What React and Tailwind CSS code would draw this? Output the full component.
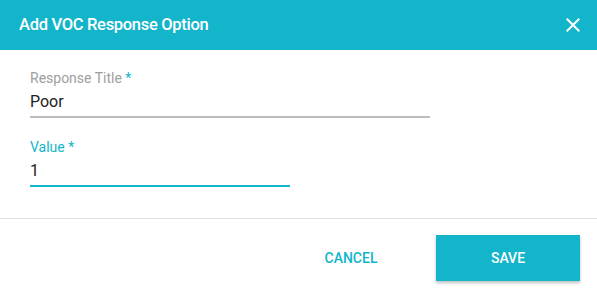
function CloseIcon() {
  return (
    <svg width="24" height="24" viewBox="0 0 24 24" fill="currentColor">
      <path d="M19 6.41L17.59 5 12 10.59 6.41 5 5 6.41 10.59 12 5 17.59 6.41 19 12 13.41 17.59 19 19 17.59 13.41 12z" />
    </svg>
  )
}

function Field({ label, value, width, focused }) {
  return (
    <div className={width}>
      <label
        className={`block text-[14px] leading-[16px] ${
          focused ? 'text-[#13b5cb]' : 'text-[#9e9e9e]'
        }`}
      >
        {label} <span className="text-[#13b5cb]">*</span>
      </label>
      <div className="mt-[5px] h-[22px] text-[16px] leading-[22px] text-[#212121]">{value}</div>
      <div className={`mt-[3px] h-[2px] ${focused ? 'bg-[#13b5cb]' : 'bg-[#bdbdbd]'}`} />
    </div>
  )
}

export default function App() {
  return (
    <div className="h-[292px] w-[597px] bg-white font-['Roboto',sans-serif]">
      <div className="flex h-[50px] items-center justify-between bg-[#13b5cb] pl-[19px] pr-[12px]">
        <h2 className="text-[16.5px] font-medium tracking-[-0.3px] text-white">Add VOC Response Option</h2>
        <button className="text-white">
          <CloseIcon />
        </button>
      </div>

      <div className="flex flex-col gap-[21px] px-[30px] pt-[20px] pb-[31px]">
        <Field label="Response Title" value="Poor" width="w-[400px]" />
        <Field label="Value" value="1" width="w-[260px]" focused />
      </div>

      <div className="h-px bg-[#e0e0e0]" />

      <div className="flex items-center justify-end gap-[35px] pt-[16px] pr-[17px]">
        <button className="h-[46px] w-[100px] text-[14px] font-medium uppercase text-[#13b5cb]">
          Cancel
        </button>
        <button className="h-[46px] w-[144px] bg-[#13b5cb] text-[14px] font-medium uppercase text-white shadow-[0_2px_3px_rgba(0,0,0,0.25)]">
          Save
        </button>
      </div>
    </div>
  )
}
